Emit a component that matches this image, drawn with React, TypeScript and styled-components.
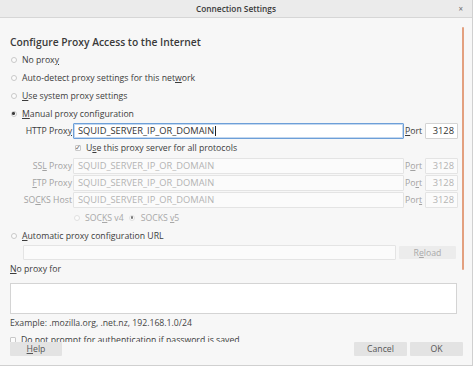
import React from "react";
import styled, { createGlobalStyle } from "styled-components";

const GlobalStyle = createGlobalStyle`
  html, body {
    margin: 0;
    padding: 0;
    background: #ffffff;
  }
  body {
    font-family: "Open Sans", "Liberation Sans", sans-serif;
    font-size: 8.7px;
    color: #3c3c3c;
  }
`;

const Window = styled.div`
  width: 473px;
  height: 366px;
  display: flex;
  flex-direction: column;
  background: #f7f7f7;
  box-sizing: border-box;
  border-right: 1px solid #d0d0d0;
  border-bottom: 1px solid #d0d0d0;
  overflow: hidden;
`;

const TitleBar = styled.div`
  height: 18px;
  flex: none;
  display: flex;
  align-items: center;
  justify-content: center;
  position: relative;
  background: #ebebeb;
  border-bottom: 1px solid #d6d6d6;
  box-sizing: border-box;
  font-size: 8.3px;
  font-weight: 600;
  color: #3a3a3a;
`;

const CloseButton = styled.span`
  position: absolute;
  right: 9px;
  top: 3px;
  font-size: 8px;
  color: #777;
`;

const ScrollArea = styled.div`
  flex: 1;
  position: relative;
  overflow: hidden;
  padding: 15px 15px 0 10px;
  display: flex;
  flex-direction: column;
`;

const ScrollThumb = styled.div`
  position: absolute;
  right: 8px;
  top: 9px;
  width: 2px;
  height: 243px;
  border-radius: 1px;
  background: #e3a07f;
`;

const Heading = styled.div`
  height: 18px;
  flex: none;
  line-height: 18px;
  font-size: 10.3px;
  font-weight: 600;
  color: #3a3a3a;
`;

const OptionRow = styled.div<{ $indent?: number; $h?: number; $disabled?: boolean }>`
  height: ${({ $h }) => $h ?? 18}px;
  flex: none;
  display: flex;
  align-items: center;
  gap: 5px;
  padding-left: ${({ $indent }) => $indent ?? 0}px;
  color: ${({ $disabled }) => ($disabled ? "#a8a8a8" : "#3c3c3c")};
  white-space: nowrap;
`;

const Radio = styled.span<{ $checked?: boolean; $disabled?: boolean }>`
  width: 6px;
  height: 6px;
  border-radius: 50%;
  flex: none;
  box-sizing: border-box;
  margin-left: 0.5px;
  margin-right: 0.5px;
  border: 1px solid ${({ $disabled }) => ($disabled ? "#e0e0e0" : "#c8c8c8")};
  background: #fcfcfc;
  display: flex;
  align-items: center;
  justify-content: center;
  &::after {
    content: "";
    display: ${({ $checked }) => ($checked ? "block" : "none")};
    width: 2.5px;
    height: 2.5px;
    border-radius: 50%;
    background: ${({ $disabled }) => ($disabled ? "#7a7a7a" : "#3a3a3a")};
  }
`;

const Check = styled.span`
  width: 6px;
  height: 6px;
  flex: none;
  box-sizing: border-box;
  border: 1px solid #c8c8c8;
  border-radius: 1px;
  background: #fcfcfc;
  display: flex;
  align-items: center;
  justify-content: center;
  font-size: 6.5px;
  line-height: 1;
  color: #666;
`;

const Key = styled.span`
  text-decoration: underline;
  text-underline-offset: 1px;
`;

const ProxyGrid = styled.div`
  display: grid;
  grid-template-columns: 52px 331px 19px 33px;
  column-gap: 1px;
  padding-left: 10px;
  align-items: center;
  flex: none;
`;

const FieldLabel = styled.div<{ $disabled?: boolean; $align?: string }>`
  height: 17px;
  display: flex;
  align-items: center;
  justify-content: ${({ $align }) => $align ?? "flex-end"};
  white-space: nowrap;
  color: ${({ $disabled }) => ($disabled ? "#a2a2a2" : "#3c3c3c")};
`;

const Field = styled.div<{ $focused?: boolean; $disabled?: boolean; $right?: boolean }>`
  height: 16px;
  box-sizing: border-box;
  display: flex;
  align-items: center;
  justify-content: ${({ $right }) => ($right ? "flex-end" : "flex-start")};
  padding: 0 3px 0 4px;
  font-size: 9.3px;
  background: ${({ $disabled }) => ($disabled ? "#fbfbfb" : "#ffffff")};
  border: 1px solid
    ${({ $focused, $disabled }) => ($focused ? "#6d9fd8" : $disabled ? "#e4e4e4" : "#d4d4d4")};
  box-shadow: ${({ $focused }) => ($focused ? "inset 0 0 0 1px #c3d8f0" : "none")};
  border-radius: 1px;
  color: ${({ $disabled }) => ($disabled ? "#b3b3b3" : "#333")};
  white-space: nowrap;
  overflow: hidden;
`;

const Caret = styled.span`
  display: inline-block;
  width: 1px;
  height: 10px;
  background: #222;
  margin-left: 1px;
`;

const FullRow = styled.div`
  grid-column: 2 / 5;
`;

const UrlRow = styled.div`
  display: flex;
  align-items: center;
  gap: 3px;
  padding-left: 13px;
  height: 15px;
  flex: none;
`;

const UrlField = styled(Field)`
  width: 373px;
  height: 15px;
`;

const FlatButton = styled.div<{ $w: number; $h?: number; $disabled?: boolean }>`
  width: ${({ $w }) => $w}px;
  height: ${({ $h }) => $h ?? 14}px;
  display: flex;
  align-items: center;
  justify-content: center;
  background: ${({ $disabled }) => ($disabled ? "#ececec" : "#e3e3e3")};
  color: ${({ $disabled }) => ($disabled ? "#a9a9a9" : "#555")};
  border-radius: 1px;
  flex: none;
`;

const SectionLabel = styled.div`
  height: 18px;
  flex: none;
  display: flex;
  align-items: center;
  margin-bottom: 5px;
`;

const TextArea = styled.div`
  height: 31px;
  flex: none;
  box-sizing: border-box;
  background: #ffffff;
  border: 1px solid #d4d4d4;
`;

const Hint = styled.div`
  height: 17px;
  flex: none;
  display: flex;
  align-items: center;
  color: #444;
`;

const ButtonBar = styled.div`
  height: 23px;
  flex: none;
  display: flex;
  align-items: flex-start;
  padding: 0 9px 0 10px;
  gap: 3px;
  box-sizing: border-box;
  background: #f7f7f7;
`;

const Spacer = styled.div`
  flex: 1;
`;

const HOST = "SQUID_SERVER_IP_OR_DOMAIN";

export default function App() {
  return (
    <>
      <GlobalStyle />
      <Window>
        <TitleBar>
          Connection Settings
          <CloseButton>×</CloseButton>
        </TitleBar>
        <ScrollArea>
          <ScrollThumb />
          <Heading>Configure Proxy Access to the Internet</Heading>
          <OptionRow>
            <Radio />
            <span>No prox<Key>y</Key></span>
          </OptionRow>
          <OptionRow>
            <Radio />
            <span>Auto-detect proxy settings for this net<Key>w</Key>ork</span>
          </OptionRow>
          <OptionRow>
            <Radio />
            <span><Key>U</Key>se system proxy settings</span>
          </OptionRow>
          <OptionRow $h={17}>
            <Radio $checked />
            <span><Key>M</Key>anual proxy configuration</span>
          </OptionRow>

          <ProxyGrid>
            <FieldLabel><span>HTTP Prox<Key>y</Key></span></FieldLabel>
            <Field $focused>
              {HOST}
              <Caret />
            </Field>
            <FieldLabel $align="flex-start"><span><Key>P</Key>ort</span></FieldLabel>
            <Field $right>3128</Field>

            <FullRow>
              <OptionRow $h={18} $indent={2}>
                <Check>✓</Check>
                <span>U<Key>s</Key>e this proxy server for all protocols</span>
              </OptionRow>
            </FullRow>

            <FieldLabel $disabled><span>SS<Key>L</Key> Proxy</span></FieldLabel>
            <Field $disabled>{HOST}</Field>
            <FieldLabel $disabled $align="flex-start"><span>P<Key>o</Key>rt</span></FieldLabel>
            <Field $disabled $right>3128</Field>

            <FieldLabel $disabled><span><Key>F</Key>TP Proxy</span></FieldLabel>
            <Field $disabled>{HOST}</Field>
            <FieldLabel $disabled $align="flex-start"><span>Po<Key>r</Key>t</span></FieldLabel>
            <Field $disabled $right>3128</Field>

            <FieldLabel $disabled><span>SO<Key>C</Key>KS Host</span></FieldLabel>
            <Field $disabled>{HOST}</Field>
            <FieldLabel $disabled $align="flex-start"><span>Por<Key>t</Key></span></FieldLabel>
            <Field $disabled $right>3128</Field>

            <FullRow>
              <OptionRow $h={19} $disabled>
                <Radio $disabled />
                <span>SOC<Key>K</Key>S v4</span>
                <Radio $checked $disabled />
                <span>SOCKS <Key>v</Key>5</span>
              </OptionRow>
            </FullRow>
          </ProxyGrid>

          <OptionRow>
            <Radio />
            <span><Key>A</Key>utomatic proxy configuration URL</span>
          </OptionRow>
          <UrlRow>
            <UrlField $disabled />
            <FlatButton $w={57} $h={13} $disabled><span>R<Key>e</Key>load</span></FlatButton>
          </UrlRow>

          <SectionLabel>
            <span><Key>N</Key>o proxy for</span>
          </SectionLabel>
          <TextArea />
          <Hint>Example: .mozilla.org, .net.nz, 192.168.1.0/24</Hint>
          <OptionRow>
            <Check />
            <span>Do not prompt for authentication if password is saved</span>
          </OptionRow>
        </ScrollArea>
        <ButtonBar>
          <FlatButton $w={52}><span><Key>H</Key>elp</span></FlatButton>
          <Spacer />
          <FlatButton $w={53}>Cancel</FlatButton>
          <FlatButton $w={53}>OK</FlatButton>
        </ButtonBar>
      </Window>
    </>
  );
}
